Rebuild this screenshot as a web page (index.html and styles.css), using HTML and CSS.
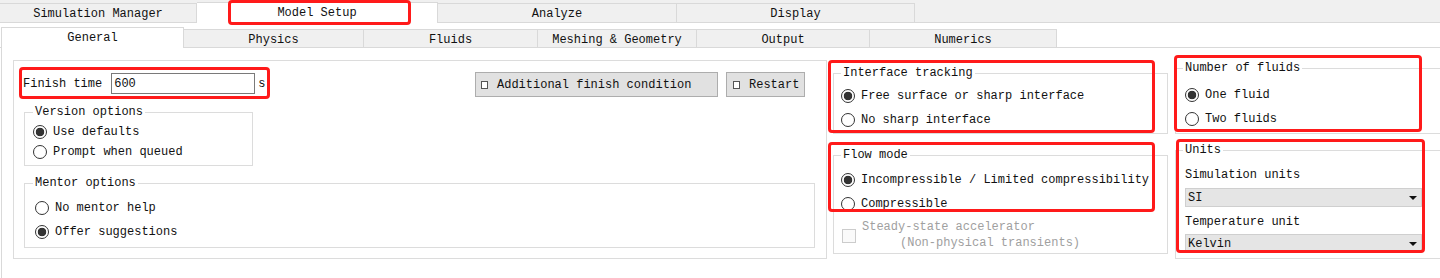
FILE: index.html
```html
<!DOCTYPE html>
<html lang="en">
<head>
<meta charset="UTF-8">
<meta name="viewport" content="width=device-width, initial-scale=1.0">
<title>Model Setup - General</title>
<link rel="stylesheet" href="styles.css">
</head>
<body>

<div class="topbar">
    <div class="tab tab-sim">Simulation Manager</div>
    <div class="tab tab-model active">Model Setup</div>
    <div class="tab tab-analyze">Analyze</div>
    <div class="tab tab-display">Display</div>
</div>

<div class="subbar">
    <div class="subtab sub-general active">General</div>
    <div class="subtab sub-physics">Physics</div>
    <div class="subtab sub-fluids">Fluids</div>
    <div class="subtab sub-meshing">Meshing &amp; Geometry</div>
    <div class="subtab sub-output">Output</div>
    <div class="subtab sub-numerics">Numerics</div>
</div>

<div class="page">
    <div class="main-panel">
        <div class="finish-row">
            <label class="finish-label">Finish time</label>
            <input type="text" class="finish-input" value="600">
            <span class="unit">s</span>
            <div class="btn-group">
                <button class="btn btn-additional"><span class="box"></span>Additional finish condition</button>
                <button class="btn btn-restart"><span class="box"></span>Restart</button>
            </div>
        </div>

        <fieldset class="group version-group">
            <legend>Version options</legend>
            <label class="opt"><input type="radio" name="version" checked>Use defaults</label>
            <label class="opt"><input type="radio" name="version">Prompt when queued</label>
        </fieldset>

        <fieldset class="group mentor-group">
            <legend>Mentor options</legend>
            <label class="opt opt-tall"><input type="radio" name="mentor">No mentor help</label>
            <label class="opt opt-tall"><input type="radio" name="mentor" checked>Offer suggestions</label>
        </fieldset>
    </div>

    <div class="mid-col">
        <fieldset class="group tracking-group">
            <legend>Interface tracking</legend>
            <label class="opt opt-tall"><input type="radio" name="tracking" checked>Free surface or sharp interface</label>
            <label class="opt opt-tall"><input type="radio" name="tracking">No sharp interface</label>
        </fieldset>

        <fieldset class="group flow-group">
            <legend>Flow mode</legend>
            <label class="opt opt-tall"><input type="radio" name="flow" checked>Incompressible / Limited compressibility</label>
            <label class="opt opt-tall"><input type="radio" name="flow">Compressible</label>
            <div class="steady">
                <span class="steady-box"></span>
                <div class="steady-text">
                    <div>Steady-state accelerator</div>
                    <div class="steady-sub">(Non-physical transients)</div>
                </div>
            </div>
        </fieldset>
    </div>

    <div class="right-col">
        <fieldset class="group fluids-group">
            <legend>Number of fluids</legend>
            <label class="opt opt-tall"><input type="radio" name="fluids" checked>One fluid</label>
            <label class="opt opt-tall"><input type="radio" name="fluids">Two fluids</label>
        </fieldset>

        <fieldset class="group units-group">
            <legend>Units</legend>
            <div class="field-label">Simulation units</div>
            <div class="combo">SI<span class="arrow"></span></div>
            <div class="field-label label-temp">Temperature unit</div>
            <div class="combo combo-temp">Kelvin<span class="arrow"></span></div>
        </fieldset>
    </div>
</div>

<!-- annotation boxes drawn over the screenshot -->
<div class="mark mark-model"></div>
<div class="mark mark-finish"></div>
<div class="mark mark-tracking"></div>
<div class="mark mark-flow"></div>
<div class="mark mark-fluids"></div>
<div class="mark mark-units"></div>

</body>
</html>
```

FILE: styles.css
```css
body {
    margin: 0;
    width: 1440px;
    height: 278px;
    overflow: hidden;
    position: relative;
    background-color: #fff;
    color: #111;
    font-family: "Liberation Mono", "DejaVu Sans Mono", monospace;
    font-size: 12px;
}

/* top level tabs */
.topbar {
    display: flex;
    align-items: flex-end;
    height: 22px;
    background-color: #f0f0f0;
    border-bottom: 1px solid #d9d9d9;
}
.tab {
    box-sizing: border-box;
    flex-shrink: 0;
    height: 19px;
    padding-top: 2px;
    line-height: 17px;
    text-align: center;
    background-color: #f0f0f0;
    border: 1px solid #d9d9d9;
    border-bottom: none;
    border-left: none;
}
.tab.active {
    height: 21px;
    margin-bottom: -1px;
    padding-top: 1px;
    background-color: #fff;
    line-height: 19px;
}
.tab-sim { width: 197px; }
.tab-model { width: 241px; }
.tab-analyze { width: 239px; }
.tab-display { width: 238px; }

/* second row tabs */
.subbar {
    display: flex;
    align-items: flex-end;
    height: 24px;
    padding-left: 1px;
    border-bottom: 1px solid #d9d9d9;
}
.subtab {
    box-sizing: border-box;
    flex-shrink: 0;
    height: 18px;
    padding-top: 2px;
    line-height: 17px;
    text-align: center;
    background-color: #f0f0f0;
    border-top: 1px solid #d9d9d9;
    border-right: 1px solid #d9d9d9;
}
.subtab.active {
    height: 21px;
    margin-bottom: -1px;
    padding-top: 1px;
    line-height: 19px;
    background-color: #fff;
    border-left: 1px solid #d9d9d9;
}
.sub-general { width: 183px; }
.sub-physics { width: 180px; }
.sub-fluids { width: 174px; }
.sub-meshing { width: 159px; }
.sub-output { width: 173px; }
.sub-numerics { width: 187px; }

.page {
    display: flex;
    align-items: flex-start;
    margin-left: 1px;
    padding-left: 11px;
    height: 230px;
    border-left: 1px solid #d9d9d9;
}
.page > div {
    flex-shrink: 0;
}

/* left panel */
.main-panel {
    box-sizing: border-box;
    width: 814px;
    margin-top: 12px;
    padding: 11px 0 10px 0;
    border: 1px solid #dcdcdc;
}
.finish-row {
    display: flex;
    align-items: flex-start;
    height: 25px;
    padding-left: 9px;
    padding-right: 21px;
}
.finish-label {
    line-height: 25px;
}
.finish-input {
    box-sizing: border-box;
    width: 144px;
    height: 21px;
    margin: 1px 0 0 9px;
    padding: 0 2px;
    border: 1px solid #7a7a7a;
    font-family: inherit;
    font-size: 12px;
    color: #111;
}
.unit {
    margin-left: 3px;
    line-height: 25px;
}
.btn-group {
    display: flex;
    gap: 8px;
    margin-left: auto;
}
.btn {
    box-sizing: border-box;
    display: flex;
    align-items: center;
    height: 25px;
    padding: 0 0 0 5px;
    background-color: #e1e1e1;
    border: 1px solid #adadad;
    font-family: inherit;
    font-size: 12px;
    color: #111;
}
.btn-additional { width: 243px; }
.btn-restart { width: 79px; padding-left: 6px; }
.box {
    box-sizing: border-box;
    width: 7px;
    height: 8px;
    margin-right: 9px;
    border: 1px solid #555;
    background-color: #fff;
}

/* group boxes */
.group {
    margin: 0;
    min-width: 0;
    border: 1px solid #dcdcdc;
}
.group legend {
    padding: 0 2px;
    line-height: 14px;
}
.opt {
    display: flex;
    align-items: center;
    height: 20px;
}
.opt-tall {
    height: 24px;
}
.opt input {
    appearance: none;
    box-sizing: border-box;
    width: 14px;
    height: 14px;
    margin: 0 6px 0 0;
    border: 1px solid #333;
    border-radius: 50%;
    background-color: #fff;
}
.opt input:checked {
    background: radial-gradient(circle, #333 0, #333 4px, #fff 4.6px);
}

.version-group {
    width: 229px;
    margin: 8px 0 0 10px;
    padding: 3px 0 3px 8px;
    box-sizing: border-box;
}
.mentor-group {
    width: 791px;
    margin: 10px 0 0 10px;
    padding: 6px 0 3px 10px;
    box-sizing: border-box;
}
.mentor-group legend {
    margin-left: -2px;
}

/* middle column */
.mid-col {
    width: 335px;
    margin-top: 18px;
    margin-left: 6px;
}
.tracking-group,
.flow-group {
    box-sizing: border-box;
    padding: 4px 0 1px 7px;
}
.flow-group {
    margin-top: 14px;
    padding-top: 6px;
    padding-bottom: 2px;
}
.steady {
    display: flex;
    align-items: center;
    margin-top: 3px;
    color: #a0a0a0;
}
.steady-box {
    box-sizing: border-box;
    width: 14px;
    height: 14px;
    margin: 1px 6px 0 1px;
    border: 1px solid #ccc;
    background-color: #fafafa;
}
.steady-text {
    line-height: 16px;
}
.steady-sub {
    padding-left: 38px;
}

/* right column */
.right-col {
    width: 290px;
    margin-top: 13px;
    margin-left: 7px;
}
.fluids-group {
    box-sizing: border-box;
    padding: 8px 0 2px 9px;
}
.units-group {
    box-sizing: border-box;
    margin-top: 9px;
    padding: 10px 0 5px 9px;
}
.fluids-group legend,
.units-group legend {
    margin-left: -2px;
}
.field-label {
    line-height: 16px;
}
.label-temp {
    margin-top: 7px;
}
.combo {
    box-sizing: border-box;
    display: flex;
    align-items: center;
    width: 237px;
    height: 19px;
    margin-top: 5px;
    padding-left: 2px;
    background-color: #e5e5e5;
    border: 1px solid #cfcfcf;
}
.combo-temp {
    margin-top: 4px;
}
.arrow {
    margin-left: auto;
    margin-right: 4px;
    width: 0;
    height: 0;
    border-left: 4px solid transparent;
    border-right: 4px solid transparent;
    border-top: 4px solid #111;
}

/* red highlight boxes */
.mark {
    position: absolute;
    box-sizing: border-box;
    border: 3px solid #ff1a1a;
    border-radius: 4px;
}
.mark-model { left: 228px; top: 0; width: 183px; height: 25px; }
.mark-finish { left: 19px; top: 67px; width: 251px; height: 32px; }
.mark-tracking { left: 828px; top: 60px; width: 327px; height: 73px; }
.mark-flow { left: 828px; top: 142px; width: 327px; height: 70px; }
.mark-fluids { left: 1174px; top: 55px; width: 248px; height: 77px; }
.mark-units { left: 1176px; top: 139px; width: 249px; height: 114px; }
```
